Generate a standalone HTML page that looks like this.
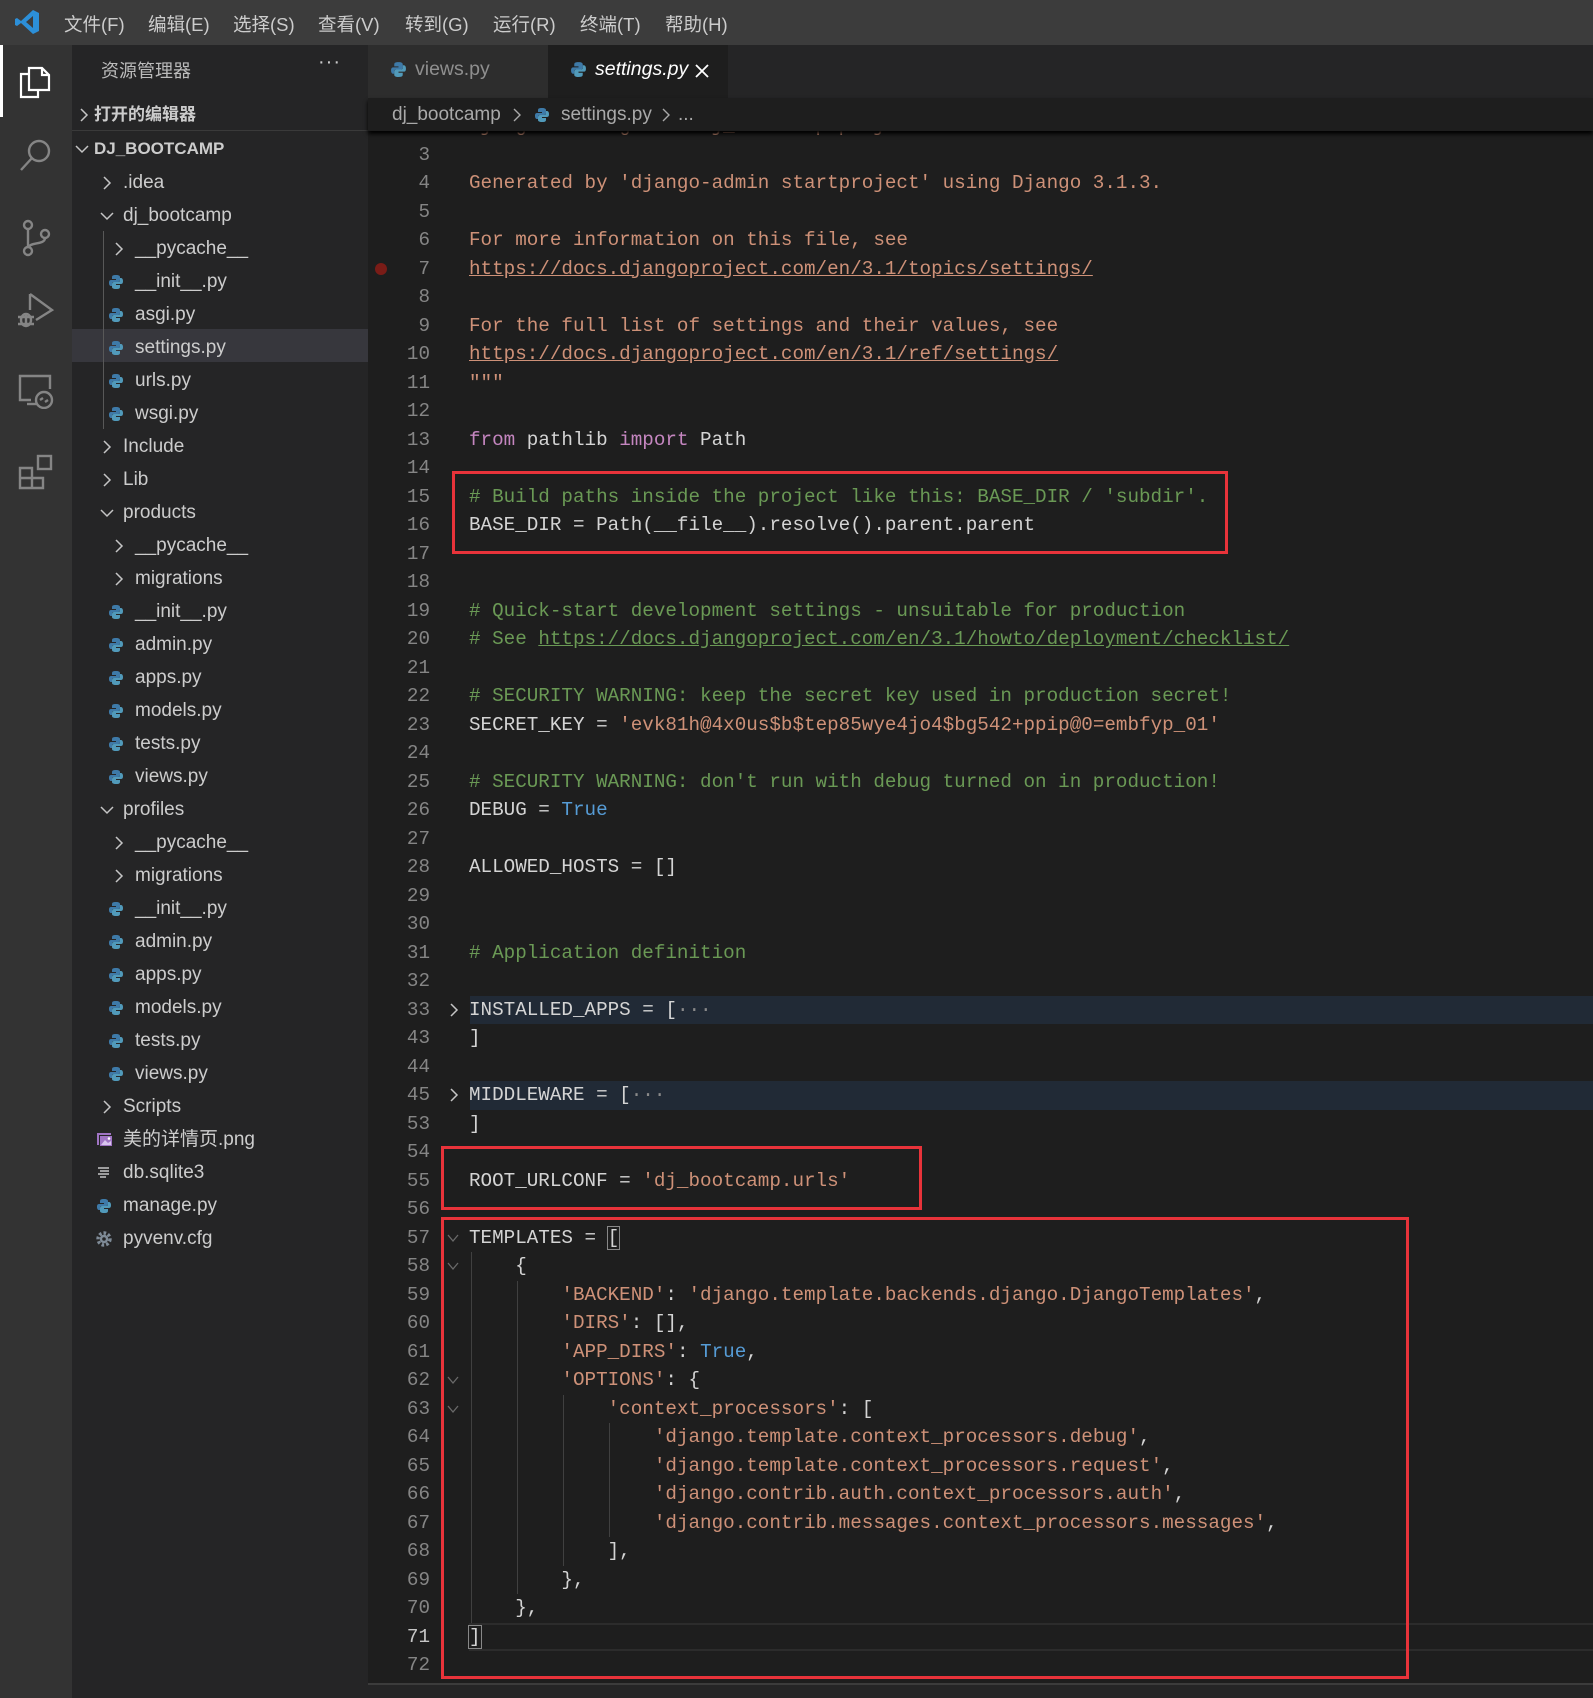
<!DOCTYPE html>
<html><head><meta charset="utf-8"><style>
*{margin:0;padding:0;box-sizing:border-box}
body{width:1593px;height:1698px;background:#1e1e1e;overflow:hidden;position:relative;font-family:"Liberation Sans","Noto Sans CJK SC",sans-serif;color:#ccc}
.abs{position:absolute}
#menu{left:0;top:0;width:1593px;height:45px;background:#3c3c3c}
#menu span{position:absolute;top:11px;font-size:18.5px;color:#cccccc}
#act{left:0;top:45px;width:72px;height:1653px;background:#333333}
#side{left:72px;top:45px;width:296px;height:1653px;background:#252526}
.row{position:absolute;left:0;width:296px;height:33px;line-height:33px;font-size:19px;color:#cccccc;white-space:nowrap}
.row svg{position:absolute}
#tabs{left:368px;top:45px;width:1225px;height:53px;background:#252526}
#crumb{left:368px;top:98px;width:1225px;height:33px;background:#1e1e1e;z-index:5;box-shadow:0 3px 4px #000}
#code{left:368px;top:131px;width:1225px;height:1552px;overflow:hidden}
.ln{position:absolute;left:0;width:1225px;height:28.5px;line-height:28.5px;font-family:"Liberation Mono",monospace;font-size:19.25px;white-space:pre;color:#d4d4d4}
.ln .n{position:absolute;left:0;width:62px;text-align:right;color:#858585}
.ln .t{position:absolute;left:101px}
.s{color:#ce9178}.c{color:#6a9955}.k{color:#c586c0}.b{color:#569cd6}.u{text-decoration:underline}
.box{position:absolute;border:3px solid #e8333a;z-index:6}
.guide{position:absolute;width:1px;background:#404040}
</style></head><body>
<div id="menu" class="abs">
<svg class="abs" style="left:14px;top:9px" width="26" height="26" viewBox="0 0 26 26"><path d="M19 1 L25 4 V22 L19 25 L7 14 L3 17 L1 16 V10 L3 9 L7 12 Z M19 7 L12 13 L19 19 Z" fill="#2c8fd8"/></svg>
<span style="left:64px">文件(F)</span><span style="left:148px">编辑(E)</span><span style="left:233px">选择(S)</span><span style="left:318px">查看(V)</span><span style="left:405px">转到(G)</span><span style="left:493px">运行(R)</span><span style="left:580px">终端(T)</span><span style="left:665px">帮助(H)</span>
</div>
<div id="act" class="abs">
<div class="abs" style="left:0;top:0;width:3px;height:72px;background:#fff"></div>
<svg class="abs" style="left:18px;top:18px" width="36" height="36" viewBox="0 0 36 36" fill="none" stroke="#fff" stroke-width="2.2"><path d="M11 5 H24 L31 12 V27 H11 Z"/><path d="M24 5 V12 H31"/><path d="M11 11 H3 V34 H20 V27"/></svg>
<svg class="abs" style="left:18px;top:92px" width="36" height="36" viewBox="0 0 36 36" fill="none" stroke="#858585" stroke-width="2.4"><circle cx="21" cy="14" r="10"/><path d="M14 21 L3 33"/></svg>
<svg class="abs" style="left:18px;top:173px" width="36" height="40" viewBox="0 0 36 40" fill="none" stroke="#858585" stroke-width="2.4"><circle cx="10" cy="7" r="4"/><circle cx="10" cy="33" r="4"/><circle cx="27" cy="16" r="4"/><path d="M10 11 V29 M27 20 C27 27 12 24 11 29"/></svg>
<svg class="abs" style="left:16px;top:245px" width="40" height="40" viewBox="0 0 40 40" fill="none" stroke="#858585" stroke-width="2.4"><path d="M14 4 L36 20 L20 30"/><path d="M14 4 V20"/><ellipse cx="10" cy="30" rx="5" ry="6"/><path d="M2 27 H18 M2 34 H18 M10 24 V36"/></svg>
<svg class="abs" style="left:17px;top:328px" width="38" height="36" viewBox="0 0 38 36" fill="none" stroke="#858585" stroke-width="2.4"><path d="M14 27 H3 V3 H33 V16"/><path d="M10 31 H20"/><circle cx="27" cy="27" r="8"/><path d="M23 27 L26 25 M31 27 L28 29"/></svg>
<svg class="abs" style="left:17px;top:408px" width="38" height="38" viewBox="0 0 38 38" fill="none" stroke="#858585" stroke-width="2.4"><path d="M3 15 H15 V35 H3 Z M3 25 H26 V35 H15"/><rect x="21" y="3" width="13" height="13"/></svg>
</div>
<div id="side" class="abs">
<div class="abs" style="left:29px;top:12px;font-size:18px;color:#bbbbbb">资源管理器</div>
<div class="abs" style="left:246px;top:6px;font-size:20px;color:#ccc;letter-spacing:1px">···</div>
<div class="abs" style="left:0;top:85px;width:296px;height:1px;background:#3a3a3a"></div>
</div>
<div id="tree" class="abs" style="left:72px;top:0;width:296px;height:1698px">
<div class="abs" style="left:0;top:329px;width:296px;height:33px;background:#37373d"></div>
<div class="guide" style="left:31px;top:231px;height:198px;background:#585858"></div>
</div>
<div id="tabs" class="abs">
<div class="abs" style="left:0;top:0;width:180px;height:53px;background:#2d2d2d"></div>
<div class="abs" style="left:180px;top:0;width:180px;height:53px;background:#1e1e1e"></div>
<svg class="abs" style="left:22px;top:16px" width="17" height="17" viewBox="0 0 16 16"><path d="M8 1 C4 1 4 2 4 4 V5 H8 V6 H3 C1 6 1 8 1 9 C1 11 2 12 3 12 H4 V10 C4 8 5 8 7 8 H10 C11 8 12 7 12 6 V3 C12 2 11 1 8 1Z" fill="#3e7aa8"/><path d="M8 15 C12 15 12 14 12 12 V11 H8 V10 H13 C15 10 15 8 15 7 C15 5 14 4 13 4 H12 V6 C12 8 11 8 9 8 H6 C5 8 4 9 4 10 V13 C4 14 5 15 8 15Z" fill="#519aba"/></svg>
<div class="abs" style="left:47px;top:13px;font-size:19.5px;color:#8f8f8f">views.py</div>
<svg class="abs" style="left:202px;top:16px" width="17" height="17" viewBox="0 0 16 16"><path d="M8 1 C4 1 4 2 4 4 V5 H8 V6 H3 C1 6 1 8 1 9 C1 11 2 12 3 12 H4 V10 C4 8 5 8 7 8 H10 C11 8 12 7 12 6 V3 C12 2 11 1 8 1Z" fill="#3e7aa8"/><path d="M8 15 C12 15 12 14 12 12 V11 H8 V10 H13 C15 10 15 8 15 7 C15 5 14 4 13 4 H12 V6 C12 8 11 8 9 8 H6 C5 8 4 9 4 10 V13 C4 14 5 15 8 15Z" fill="#519aba"/></svg>
<div class="abs" style="left:227px;top:13px;font-size:19.5px;color:#ffffff;font-style:italic">settings.py</div>
<svg class="abs" style="left:327px;top:19px" width="14" height="14" viewBox="0 0 14 14" stroke="#fff" stroke-width="1.8"><path d="M1 1 L13 13 M13 1 L1 13"/></svg>
</div>
<div id="crumb" class="abs">
<div class="abs" style="left:24px;top:6px;font-size:19px;color:#a9a9a9;white-space:nowrap">dj_bootcamp</div>
<svg class="abs" style="left:144px;top:10px" width="10" height="14" viewBox="0 0 10 14" fill="none" stroke="#a9a9a9" stroke-width="1.4"><path d="M2 1 L8 7 L2 13"/></svg>
<svg class="abs" style="left:166px;top:9px" width="16" height="16" viewBox="0 0 16 16"><path d="M8 1 C4 1 4 2 4 4 V5 H8 V6 H3 C1 6 1 8 1 9 C1 11 2 12 3 12 H4 V10 C4 8 5 8 7 8 H10 C11 8 12 7 12 6 V3 C12 2 11 1 8 1Z" fill="#3e7aa8"/><path d="M8 15 C12 15 12 14 12 12 V11 H8 V10 H13 C15 10 15 8 15 7 C15 5 14 4 13 4 H12 V6 C12 8 11 8 9 8 H6 C5 8 4 9 4 10 V13 C4 14 5 15 8 15Z" fill="#519aba"/></svg>
<div class="abs" style="left:193px;top:6px;font-size:19px;color:#a9a9a9;white-space:nowrap">settings.py</div>
<svg class="abs" style="left:293px;top:10px" width="10" height="14" viewBox="0 0 10 14" fill="none" stroke="#a9a9a9" stroke-width="1.4"><path d="M2 1 L8 7 L2 13"/></svg>
<div class="abs" style="left:310px;top:6px;font-size:19px;color:#a9a9a9">...</div>
</div>
<div id="code" class="abs"></div>
<div class="abs" style="left:368px;top:1683px;width:1225px;height:15px;background:#252526;border-top:2px solid #3c3c3c"></div>
<div class="box" style="left:452px;top:471px;width:776px;height:83px"></div>
<div class="box" style="left:441px;top:1146px;width:481px;height:64px"></div>
<div class="box" style="left:441px;top:1217px;width:968px;height:462px"></div>
<script>
var py='<path d="M8 1 C4 1 4 2 4 4 V5 H8 V6 H3 C1 6 1 8 1 9 C1 11 2 12 3 12 H4 V10 C4 8 5 8 7 8 H10 C11 8 12 7 12 6 V3 C12 2 11 1 8 1Z" fill="#3e7aa8"/><path d="M8 15 C12 15 12 14 12 12 V11 H8 V10 H13 C15 10 15 8 15 7 C15 5 14 4 13 4 H12 V6 C12 8 11 8 9 8 H6 C5 8 4 9 4 10 V13 C4 14 5 15 8 15Z" fill="#519aba"/>';
function chev(x,y,open){return '<svg style="left:'+x+'px;top:'+y+'px" width="14" height="14" viewBox="0 0 14 14" fill="none" stroke="#c5c5c5" stroke-width="1.5">'+(open?'<path d="M1 4 L7 10 L13 4"/>':'<path d="M4 1 L10 7 L4 13"/>')+'</svg>';}
var tree=document.getElementById('tree');var h='';
function row(cy,html){h+='<div class="row" style="top:'+(cy-16.5)+'px">'+html+'</div>';}
row(114,chev(5,10,0)+'<span style="position:absolute;left:22px;font-weight:bold;font-size:17px;color:#cccccc">打开的编辑器</span>');
row(148,chev(3,10,1)+'<span style="position:absolute;left:22px;font-weight:bold;font-size:17px;color:#cccccc">DJ_BOOTCAMP</span>');
var items=[['d',1,'.idea'],['o',1,'dj_bootcamp'],['d',2,'__pycache__'],['p',2,'__init__.py'],['p',2,'asgi.py'],['p',2,'settings.py'],['p',2,'urls.py'],['p',2,'wsgi.py'],['d',1,'Include'],['d',1,'Lib'],['o',1,'products'],['d',2,'__pycache__'],['d',2,'migrations'],['p',2,'__init__.py'],['p',2,'admin.py'],['p',2,'apps.py'],['p',2,'models.py'],['p',2,'tests.py'],['p',2,'views.py'],['o',1,'profiles'],['d',2,'__pycache__'],['d',2,'migrations'],['p',2,'__init__.py'],['p',2,'admin.py'],['p',2,'apps.py'],['p',2,'models.py'],['p',2,'tests.py'],['p',2,'views.py'],['d',1,'Scripts'],['i',1,'美的详情页.png'],['f',1,'db.sqlite3'],['p',1,'manage.py'],['g',1,'pyvenv.cfg']];
items.forEach(function(it,i){var cy=182+i*33,t=it[0],d=it[1],s='';
 var tx=d==1?51:63;
 if(t=='d'||t=='o'){s+=chev(d==1?28:40,10,t=='o');}
 else if(t=='p'){s+='<svg style="left:'+(d==1?24:36)+'px;top:9px" width="16" height="16" viewBox="0 0 16 16">'+py+'</svg>';}
 else if(t=='i'){s+='<svg style="left:24px;top:9px" width="17" height="15" viewBox="0 0 17 15"><path d="M1 1 H15 V3 H3 V13 H1Z" fill="#a074c4"/><rect x="4" y="4" width="12" height="10" fill="#a074c4"/><path d="M5 13 L9 8 L12 11 L15 9 V13Z" fill="#d9c4ee"/><circle cx="13" cy="6.5" r="1.3" fill="#fff"/></svg>';}
 else if(t=='f'){s+='<svg style="left:25px;top:10px" width="14" height="13" viewBox="0 0 14 13" stroke="#c5c5c5" stroke-width="1.6"><path d="M1 2 H12 M3 5 H12 M1 8 H12 M3 11 H9"/></svg>';}
 else if(t=='g'){s+='<svg style="left:23px;top:8px" width="18" height="18" viewBox="0 0 18 18"><circle cx="9" cy="9" r="6" fill="none" stroke="#7f8b97" stroke-width="3.4" stroke-dasharray="2.6 2"/><circle cx="9" cy="9" r="4.2" fill="#7f8b97"/><circle cx="9" cy="9" r="1.8" fill="#252526"/></svg>';}
 s+='<span style="position:absolute;left:'+tx+'px">'+it[2]+'</span>';
 row(cy,s);});
tree.innerHTML+=h;

var L=[
[2,'<span class="s">Django settings for dj_bootcamp project.</span>'],[3,''],
[4,'<span class="s">Generated by \'django-admin startproject\' using Django 3.1.3.</span>'],[5,''],
[6,'<span class="s">For more information on this file, see</span>'],
[7,'<span class="s u">https://docs.djangoproject.com/en/3.1/topics/settings/</span>'],[8,''],
[9,'<span class="s">For the full list of settings and their values, see</span>'],
[10,'<span class="s u">https://docs.djangoproject.com/en/3.1/ref/settings/</span>'],
[11,'<span class="s">"""</span>'],[12,''],
[13,'<span class="k">from</span> pathlib <span class="k">import</span> Path'],[14,''],
[15,'<span class="c"># Build paths inside the project like this: BASE_DIR / \'subdir\'.</span>'],
[16,'BASE_DIR = Path(__file__).resolve().parent.parent'],[17,''],[18,''],
[19,'<span class="c"># Quick-start development settings - unsuitable for production</span>'],
[20,'<span class="c"># See <span class="u">https://docs.djangoproject.com/en/3.1/howto/deployment/checklist/</span></span>'],[21,''],
[22,'<span class="c"># SECURITY WARNING: keep the secret key used in production secret!</span>'],
[23,'SECRET_KEY = <span class="s">\'evk81h@4x0us$b$tep85wye4jo4$bg542+ppip@0=embfyp_01\'</span>'],[24,''],
[25,'<span class="c"># SECURITY WARNING: don\'t run with debug turned on in production!</span>'],
[26,'DEBUG = <span class="b">True</span>'],[27,''],
[28,'ALLOWED_HOSTS = []'],[29,''],[30,''],
[31,'<span class="c"># Application definition</span>'],[32,''],
[33,'INSTALLED_APPS = [<span style="color:#8a8a8a">···</span>','f'],[43,']'],[44,''],
[45,'MIDDLEWARE = [<span style="color:#8a8a8a">···</span>','f'],[53,']'],[54,''],
[55,'ROOT_URLCONF = <span class="s">\'dj_bootcamp.urls\'</span>'],[56,''],
[57,'TEMPLATES = <span style="outline:1px solid #888">[</span>','o'],
[58,'    {','o'],
[59,'        <span class="s">\'BACKEND\'</span>: <span class="s">\'django.template.backends.django.DjangoTemplates\'</span>,'],
[60,'        <span class="s">\'DIRS\'</span>: [],'],
[61,'        <span class="s">\'APP_DIRS\'</span>: <span class="b">True</span>,'],
[62,'        <span class="s">\'OPTIONS\'</span>: {','o'],
[63,'            <span class="s">\'context_processors\'</span>: [','o'],
[64,'                <span class="s">\'django.template.context_processors.debug\'</span>,'],
[65,'                <span class="s">\'django.template.context_processors.request\'</span>,'],
[66,'                <span class="s">\'django.contrib.auth.context_processors.auth\'</span>,'],
[67,'                <span class="s">\'django.contrib.messages.context_processors.messages\'</span>,'],
[68,'            ],'],[69,'        },'],[70,'    },'],
[71,'<span style="outline:1px solid #888">]</span>','cur'],[72,'']];
var code=document.getElementById('code'),o='';
L.forEach(function(l,i){var top=-18.75+i*28.5;var extra='';
 if(l[2]=='f'){extra='<div style="position:absolute;left:102px;top:0;width:1123px;height:28.5px;background:#212a36"></div><svg style="position:absolute;left:79px;top:7px" width="14" height="14" viewBox="0 0 14 14" fill="none" stroke="#c5c5c5" stroke-width="1.5"><path d="M4 1 L10 7 L4 13"/></svg>';}
 if(l[2]=='o'){extra='<svg style="position:absolute;left:78px;top:8px" width="14" height="12" viewBox="0 0 14 12" fill="none" stroke="#6a6a6a" stroke-width="1.3"><path d="M2 3 L7 9 L12 3"/></svg>';}
 if(l[2]=='cur'){extra='<div style="position:absolute;left:101px;top:0;width:1124px;height:28.5px;border-top:2px solid #2c2c2c;border-bottom:2px solid #2c2c2c"></div>';}
 var nc=l[2]=='cur'?'color:#c6c6c6':'';
 o+='<div class="ln" style="top:'+top+'px">'+extra+'<span class="n" style="'+nc+'">'+l[0]+'</span><span class="t">'+l[1]+'</span></div>';});
o+='<div style="position:absolute;left:7px;top:'+(-18.75+5*28.5+8)+'px;width:12px;height:12px;border-radius:6px;background:#7a1c17"></div>';
function g(x,a,b){o+='<div class="guide" style="left:'+(101+x)+'px;top:'+(-18.75+a*28.5)+'px;height:'+((b-a)*28.5)+'px"></div>';}
g(2,40,53);g(48,41,52);g(94,45,51);g(140,46,50);
code.innerHTML=o;
</script>
</body></html>
